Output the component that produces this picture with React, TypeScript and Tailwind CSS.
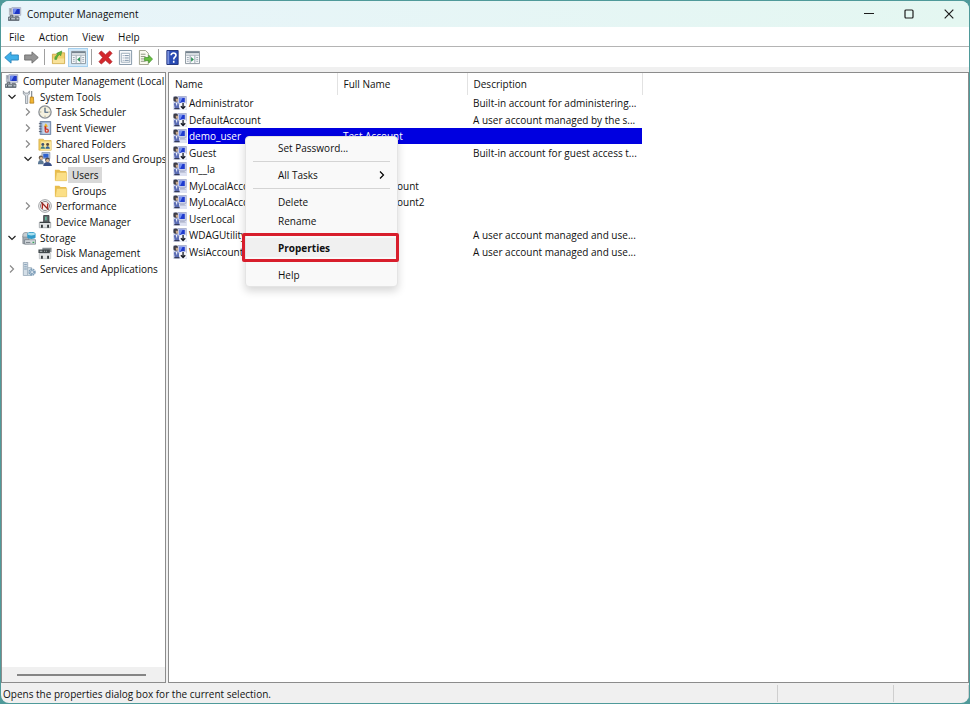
import type { ReactNode } from "react";
import clsx from "clsx";

type IconProps = { className?: string };

const Svg = ({ className, children }: IconProps & { children: ReactNode }) => (
	<svg viewBox="0 0 16 16" className={clsx("shrink-0", className ?? "size-[14px]")} aria-hidden="true">
		{children}
	</svg>
);

const ComputerIcon = ({ className }: IconProps) => (
	<Svg className={className}>
		<path d="M1 1h4v8H1z" fill="#b9bec8" />
		<path d="M2 2.500h2M2 4.500h2" stroke="#7d8492" />
		<path d="M4.500.5h10v9h-10z" fill="#d5d9e4" stroke="#a9afc4" />
		<path d="M6 2h7.500v6H6z" fill="#1c35c4" />
		<path d="M6 2h4.500L7 8H6z" fill="#6f8cf0" />
		<path d="M8 10h4v1.500H8z" fill="#8c90a0" />
		<path d="M2.500 9.500h3v2h-3z" fill="none" stroke="#4d5560" />
		<path d="M.5 11.500h12v4H.5z" fill="#87929b" stroke="#5d6670" />
		<path d="M1 13h11" stroke="#c8d0d6" />
		<path d="M3 12.500v2M9 12.500v2" stroke="#2f363e" />
	</Svg>
);

const UserIcon = ({ disabled, className }: IconProps & { disabled?: boolean }) => (
	<Svg className={className}>
		<path d="M0 0h16v16H0z" fill="#dde1f2" />
		<path d="M5.500.5h9.500v9H5.500z" fill="#d3d8ee" stroke="#a6adcb" />
		<path d="M7 2h6.500v6H7z" fill="#1f3bcf" />
		<path d="M7 2h4L8 8H7z" fill="#7791ee" />
		<path d="M8 10.500h5l2 1.500H8z" fill="#a3a9c2" />
		<path d="M.5 2C1 .5 4.500 0 5.500 2l.3 3-1.300 1.500H2L.5 5z" fill="#3b3b45" />
		<path d="M3 3h2.700v3.200H3.500z" fill="#c9a88c" />
		<path d="M1 9c1-2 4-2 5.500 0l1 5.500H2z" fill="#5a6bb4" />
		<path d="M3 8h2l-.5 4z" fill="#eef1fa" />
		<path d="M1.500 14.500h6" stroke="#343b5c" strokeWidth="1.500" />
		{disabled && (
			<>
				<circle cx="11.500" cy="11.500" r="4.500" fill="#f5f6fb" />
				<path d="M11.500 8v6M9 11.700l2.500 2.600 2.500-2.600" fill="none" stroke="#171a26" strokeWidth="1.500" />
			</>
		)}
	</Svg>
);

const UsersIcon = () => (
	<Svg>
		<path d="M4.500.5h9v7h-9z" fill="#c8d2e2" stroke="#8a97ae" />
		<path d="M6 2h6v4.500H6z" fill="#2f62cf" />
		<path d="M0 13c0-5 6-5 6.500-1v2H0z" fill="#5c7895" />
		<circle cx="3.300" cy="6.500" r="2.500" fill="#6b5a4a" />
		<circle cx="3.800" cy="7.200" r="1.600" fill="#e2bd98" />
		<path d="M6 16c0-6 9-6 10 0z" fill="#394f86" />
		<circle cx="10.800" cy="9" r="2.700" fill="#4d4b50" />
		<circle cx="11" cy="9.800" r="1.800" fill="#e0bc97" />
	</Svg>
);

const ToolsIcon = () => (
	<Svg>
		<path
			d="M1.500 1v3.500L4 6.500v9h2.500v-9L8.500 4.500V1L7 3.500H3z"
			fill="#d8dde2"
			stroke="#7c858e"
			strokeWidth=".8"
		/>
		<path d="M11 1v8" stroke="#8a9198" strokeWidth="1.500" />
		<path d="M9.500 8H13l.5 7H9z" fill="#f2b632" stroke="#a97415" strokeWidth=".8" />
	</Svg>
);

const ClockIcon = () => (
	<Svg>
		<circle cx="8" cy="8" r="7" fill="#f5f1df" stroke="#8c9196" strokeWidth="1.500" />
		<path d="M8 2.500v1.300M8 12.200v1.300M2.500 8h1.300M12.200 8h1.300" stroke="#9a9272" />
		<path d="M8 3.500V8.300h3.800" fill="none" stroke="#3d5878" strokeWidth="1.300" />
	</Svg>
);

const EventIcon = () => (
	<Svg>
		<path d="M2.500.5h12v15h-12z" fill="#8fa8cc" stroke="#6a80a2" />
		<path d="M5 2h8.500v12.500H5z" fill="#c4d3e8" />
		<path d="M1 3h3M1 6h3M1 9h3M1 12h3" stroke="#51596a" />
		<path d="m9 2.500 2.500 4h-5z" fill="#f0b51d" />
		<path d="M8.500 6v4" stroke="#c2281d" strokeWidth="2" />
		<circle cx="10" cy="11" r="2.500" fill="#cf3d30" />
		<circle cx="10" cy="11" r="1" fill="#f3cfc6" />
	</Svg>
);

const SharedIcon = () => (
	<Svg>
		<path d="M1 2.500h5l1.500 1.500H15v11H1z" fill="#edc95c" stroke="#d6ae4b" strokeWidth=".8" />
		<path d="M3 5h12v10H3z" fill="#f9e59a" />
		<circle cx="5.500" cy="8.500" r="1.700" fill="#3f5472" />
		<path d="M3 13.500c0-4 5-4 5 0z" fill="#3f7d82" />
		<circle cx="11" cy="8.500" r="1.700" fill="#5d4b3b" />
		<path d="M8.500 13.500c0-4 5-4 5 0z" fill="#2d5f99" />
	</Svg>
);

const FolderIcon = () => (
	<Svg>
		<path d="M1 2h5l1.500 1.500H14v10.500H1z" fill="#e9bd4c" />
		<path d="M3 5h11.500v9.500H1.500z" fill="#fbdf86" stroke="#e5bf58" strokeWidth=".7" />
	</Svg>
);

const PerformanceIcon = () => (
	<Svg>
		<circle cx="8" cy="8" r="7.200" fill="#fff" stroke="#8d9094" />
		<circle cx="8" cy="8" r="5.200" fill="#fbecea" stroke="#777b80" />
		<path d="M5 11V5l6 6V5" fill="none" stroke="#b3251f" strokeWidth="1.500" />
		<path d="m3 3 9.500 10" stroke="#72302c" />
	</Svg>
);

const DeviceIcon = () => (
	<Svg>
		<path d="M6.500.5h6v8h-6z" fill="#62686c" stroke="#34393c" />
		<path d="M8 2h2v4H8z" fill="#62b89b" />
		<path d="M1.500 8.500h13v6h-13z" fill="#dfe2e3" stroke="#a3a8ab" />
		<path d="M2 8.500h12" stroke="#3c4144" strokeWidth="1.500" />
		<path d="M4.500 11v3.500M11.500 11v3.500" stroke="#272b2e" strokeWidth="2" />
	</Svg>
);

const StorageIcon = () => (
	<Svg>
		<path d="M1 6h7v8.500H1z" fill="#a4acb2" stroke="#707980" strokeWidth=".8" />
		<path d="M1 4c0-3 7-3 7 0v3H1z" fill="#c7ced2" stroke="#7a848c" strokeWidth=".8" />
		<path d="M6 3.500c0-3 9.500-3 9.500 0v4c0 2-9.500 2-9.500 0z" fill="#329bc9" />
		<ellipse cx="10.700" cy="3.500" rx="4.200" ry="1.600" fill="#a9e0ef" />
		<path d="M3 10h12.500v5H3z" fill="#d7dce0" stroke="#69737c" strokeWidth=".8" />
		<path d="M4.500 13h5" stroke="#626b74" />
		<path d="M12 13h2" stroke="#37a558" strokeWidth="1.500" />
	</Svg>
);

const DiskIcon = () => (
	<Svg>
		<path d="M5 2h10.500v5H5z" fill="#868d91" />
		<path d="M.5 4h13v4H.5z" fill="#3f4649" />
		<path d="M2 6h3M7 6h1M9 6h1" stroke="#d4dadc" />
		<path d="M1.500 8.500h13v6h-13z" fill="#e4e6e7" stroke="#a9aeb1" strokeWidth=".7" />
		<path d="M4.500 11v3.500M11.500 11v3.500" stroke="#2b3033" strokeWidth="2" />
	</Svg>
);

const ServicesIcon = () => (
	<Svg>
		<path d="M1.500.5h5v15h-5z" fill="#d3dee7" stroke="#9aacbb" />
		<path d="M2.500 3h3M2.500 5.500h3M2.500 8h3" stroke="#7896af" />
		<path d="M6.500 6.500h4.500v9H6.500z" fill="#dce5eb" stroke="#a2b3c0" />
		<circle cx="11.500" cy="11.500" r="3" fill="none" stroke="#7f9fba" strokeWidth="2.500" strokeDasharray="1.800 .6" />
		<circle cx="11.500" cy="11.500" r="1.700" fill="#e9f0f5" stroke="#7f9fba" />
	</Svg>
);

const ArrowIcon = ({ back }: { back?: boolean }) => (
	<Svg className="size-[15px]">
		<path
			d={back ? "m.8 8 6.700-6V5.300h7.800v5.400H7.500V14z" : "M15.200 8 8.500 2v3.300H.7v5.400h7.800V14z"}
			fill={back ? "#3fb0ea" : "#959595"}
			stroke={back ? "#2c86bd" : "#707070"}
		/>
	</Svg>
);

const UpFolderIcon = () => (
	<Svg className="size-[15px]">
		<path d="M1.500 4.500h5L8 3h6.500v11.500h-13z" fill="#eed06c" stroke="#cfa94b" />
		<path d="M2 9h12v5H2z" fill="#f8e29a" />
		<path d="M4 10c0-3 1-4 3-5L6 3.500 11.500 1l-1 5-1.500-1C7.500 6 6.500 7 6 10z" fill="#5db53c" stroke="#3e8f2c" strokeWidth=".6" />
	</Svg>
);

const PaneIcon = ({ right }: { right?: boolean }) => (
	<Svg className="size-[15px]">
		<path d="M.5 1.500h15v13H.5z" fill="#f6f8fa" stroke="#8b959e" />
		<path d="M1 2.500h14" stroke="#74828e" strokeWidth="2" />
		<path d="M1 5.500h14M10.500 6v8M5.500 6v8" stroke="#98a4ae" />
		<path d="M2 8h2M2 10h2M2 12h2M12 8h2M12 10h2M12 12h2" stroke="#9ba8b3" />
		<path d={right ? "m6.500 7.500 3 2.500-3 2.500z" : "m9.500 7.500-3 2.500 3 2.500z"} fill="#289050" />
	</Svg>
);

const DeleteIcon = () => (
	<Svg className="size-[15px]">
		<path
			d="M3.500 1 8 5l4.500-4L15 3.500 11 8l4 4.500-2.500 2.500L8 11l-4.500 4L1 12.500 5 8 1 3.500z"
			fill="#d4272c"
			stroke="#a5161b"
			strokeWidth=".7"
		/>
	</Svg>
);

const SheetIcon = () => (
	<Svg className="size-[15px]">
		<path d="M1.500.5h13v15h-13z" fill="#f7f9fb" stroke="#8093a4" />
		<path d="M3.500 3.500h9v9.500h-9z" fill="#fff" stroke="#9aabb9" />
		<path d="M5 6h1M7 6h4.500M5 8.500h1M7 8.500h4.500M5 11h1M7 11h4.500" stroke="#7087a0" />
	</Svg>
);

const ExportIcon = () => (
	<Svg className="size-[15px]">
		<path d="M1.500.5H8l3 3v12H1.500z" fill="#fbfaf0" stroke="#9d9f89" />
		<path d="M3 4.500h5M3 7h5M3 9.500h4M3 12h5" stroke="#87917a" />
		<path d="M7 8h4.500V5.500l4 4.200-4 4.200v-2.500H7z" fill="#68bf3f" stroke="#388b22" strokeWidth=".7" />
	</Svg>
);

const HelpIcon = () => (
	<Svg className="size-[15px]">
		<path d="M2 .5h12v15H2z" fill="#294bb5" stroke="#1c2f78" />
		<path d="M2.500 1h2v14h-2z" fill="#7a91dc" />
		<path d="M6.500 5.700c0-3.400 5.200-3.200 5.200 0 0 2-2.400 1.900-2.400 4.300M9.300 11.500v2" fill="none" stroke="#fff" strokeWidth="1.700" />
	</Svg>
);

const Chevron = ({ open, className }: { open?: boolean; className?: string }) => (
	<svg viewBox="0 0 10 10" className={clsx("size-[10px]", className)} aria-hidden="true">
		<path
			d={open ? "M1.500 3 5 6.500 8.500 3" : "M3 1.500 6.500 5 3 8.500"}
			fill="none"
			stroke={open ? "#222" : "currentColor"}
			strokeWidth="1.200"
		/>
	</svg>
);

type Node = {
	label: string;
	icon: ReactNode;
	indent: string;
	open?: boolean;
	leaf?: boolean;
	selected?: boolean;
};

const tree: Node[] = [
	{ label: "System Tools", icon: <ToolsIcon />, indent: "pl-[5px]", open: true },
	{ label: "Task Scheduler", icon: <ClockIcon />, indent: "pl-[21px]" },
	{ label: "Event Viewer", icon: <EventIcon />, indent: "pl-[21px]" },
	{ label: "Shared Folders", icon: <SharedIcon />, indent: "pl-[21px]" },
	{ label: "Local Users and Groups", icon: <UsersIcon />, indent: "pl-[21px]", open: true },
	{ label: "Users", icon: <FolderIcon />, indent: "pl-[37px]", leaf: true, selected: true },
	{ label: "Groups", icon: <FolderIcon />, indent: "pl-[37px]", leaf: true },
	{ label: "Performance", icon: <PerformanceIcon />, indent: "pl-[21px]" },
	{ label: "Device Manager", icon: <DeviceIcon />, indent: "pl-[21px]", leaf: true },
	{ label: "Storage", icon: <StorageIcon />, indent: "pl-[5px]", open: true },
	{ label: "Disk Management", icon: <DiskIcon />, indent: "pl-[21px]", leaf: true },
	{ label: "Services and Applications", icon: <ServicesIcon />, indent: "pl-[5px]" },
];

const users = [
	{ name: "Administrator", full: "", desc: "Built-in account for administering...", disabled: true },
	{ name: "DefaultAccount", full: "", desc: "A user account managed by the s...", disabled: true },
	{ name: "demo_user", full: "Test Account", desc: "", selected: true },
	{ name: "Guest", full: "", desc: "Built-in account for guest access t...", disabled: true },
	{ name: "m__la", full: "", desc: "" },
	{ name: "MyLocalAccount", full: "MyLocalAccount", desc: "" },
	{ name: "MyLocalAccount2", full: "MyLocalAccount2", desc: "" },
	{ name: "UserLocal", full: "", desc: "" },
	{ name: "WDAGUtilityAccount", full: "", desc: "A user account managed and use...", disabled: true },
	{ name: "WsiAccount", full: "", desc: "A user account managed and use...", disabled: true },
];

const TitleBar = () => (
	<header className="flex h-[26px] items-center bg-linear-to-r from-[#e8f4fa] to-[#e4f7f1] pl-[7px]">
		<ComputerIcon />
		<h1 className="ml-[5px] flex-1">Computer Management</h1>
		<div className="flex h-full text-[#1c1c1c]">
			<button aria-label="Minimize" className="grid w-10 place-items-center">
				<svg viewBox="0 0 10 10" className="size-[10px]">
					<path d="M0 4.500h10" stroke="currentColor" />
				</svg>
			</button>
			<button aria-label="Maximize" className="grid w-10 place-items-center">
				<svg viewBox="0 0 10 10" className="size-[10px]">
					<rect x="1" y="1" width="8" height="8" rx="1" fill="none" stroke="currentColor" strokeWidth="1.200" />
				</svg>
			</button>
			<button aria-label="Close" className="grid w-10 place-items-center">
				<svg viewBox="0 0 10 10" className="size-[10px]">
					<path d="m.7.7 8.600 8.600M9.300.7.7 9.300" stroke="currentColor" strokeWidth="1.200" />
				</svg>
			</button>
		</div>
	</header>
);

const ToolButton = ({ label, active, children }: { label: string; active?: boolean; children: ReactNode }) => (
	<button
		aria-label={label}
		className={clsx(
			"grid h-[19px] w-5 place-items-center border",
			active ? "border-[#a5d0ef] bg-[#d3e9f9]" : "border-transparent",
		)}
	>
		{children}
	</button>
);

const Divider = () => <span className="mx-[3px] h-4 w-px bg-[#a0a0a0]" />;

const Toolbar = () => (
	<div className="flex h-[21px] items-center border-t border-[#b4b4b4] bg-white">
		<ToolButton label="Back">
			<ArrowIcon back />
		</ToolButton>
		<ToolButton label="Forward">
			<ArrowIcon />
		</ToolButton>
		<Divider />
		<ToolButton label="Up one level">
			<UpFolderIcon />
		</ToolButton>
		<ToolButton label="Show/Hide Console Tree" active>
			<PaneIcon />
		</ToolButton>
		<Divider />
		<ToolButton label="Delete">
			<DeleteIcon />
		</ToolButton>
		<ToolButton label="Properties">
			<SheetIcon />
		</ToolButton>
		<ToolButton label="Export List">
			<ExportIcon />
		</ToolButton>
		<Divider />
		<ToolButton label="Help">
			<HelpIcon />
		</ToolButton>
		<ToolButton label="Show/Hide Action Pane">
			<PaneIcon right />
		</ToolButton>
	</div>
);

const Tree = () => (
	<nav className="flex w-[165px] shrink-0 flex-col overflow-hidden border border-[#8c8c8c] bg-white">
		<ul className="grid h-[204px] auto-rows-fr whitespace-nowrap">
			<li className="flex items-center gap-1 pl-[3px]">
				<ComputerIcon />
				<span>Computer Management (Local</span>
			</li>
			{tree.map((n) => (
				<li key={n.label} className={clsx("flex items-center", n.indent)}>
					{n.leaf ? (
						<span className="w-[15px]" />
					) : (
						<button aria-label={`Toggle ${n.label}`} className="w-[15px] shrink-0 text-[#8a8a8a]">
							<Chevron open={n.open} />
						</button>
					)}
					{n.icon}
					<span className={clsx("pr-[3px] pl-1", n.selected && "bg-[#d9d9d9]")}>{n.label}</span>
				</li>
			))}
		</ul>
		<div className="mt-auto flex h-[15px] items-center bg-[#f0f0f0] px-[15px]">
			<div className="mr-1 h-0.5 flex-1 bg-[#858585]" />
		</div>
	</nav>
);

const MenuItem = ({ children, className }: { children: ReactNode; className?: string }) => (
	<button role="menuitem" className={clsx("flex h-[19px] w-full items-center justify-between pr-[10px] pl-8", className)}>
		{children}
	</button>
);

const MenuRule = () => <hr className="mx-[7px] mt-1 mb-[3px] border-t border-[#d4d4d4]" />;

const ContextMenu = () => (
	<div
		role="menu"
		className="absolute top-[63px] left-[76px] w-[153px] rounded-sm border border-[#e4e4e4] bg-[#f9f9f9] pt-px pb-0.5 shadow-[0_4px_8px_rgba(0,0,0,0.16)]"
	>
		<MenuItem>Set Password...</MenuItem>
		<MenuRule />
		<MenuItem>
			All Tasks
			<Chevron className="text-black" />
		</MenuItem>
		<MenuRule />
		<MenuItem>Delete</MenuItem>
		<MenuItem>Rename</MenuItem>
		<div className="relative my-2">
			<MenuItem className="bg-[#f0f0f0] font-bold">Properties</MenuItem>
			<span className="pointer-events-none absolute -inset-y-[5px] -right-0.5 -left-1 rounded-xs border-3 border-[#d81e2c]" />
		</div>
		<MenuItem>Help</MenuItem>
	</div>
);

const UserList = () => (
	<main className="relative min-w-0 flex-1 border border-[#8c8c8c] bg-white">
		<table className="w-[473px] table-fixed border-collapse text-left whitespace-nowrap">
			<colgroup>
				<col className="w-[19px]" />
				<col className="w-[149px]" />
				<col className="w-[130px]" />
				<col className="w-[175px]" />
			</colgroup>
			<thead>
				<tr className="h-[22px]">
					<th colSpan={2} className="border-r border-[#e2e2e2] py-0 pr-0 pl-[6px] font-normal">
						Name
					</th>
					<th className="border-r border-[#e2e2e2] py-0 pr-0 pl-[6px] font-normal">Full Name</th>
					<th className="border-r border-[#e2e2e2] py-0 pr-0 pl-[6px] font-normal">Description</th>
				</tr>
			</thead>
			<tbody>
				{users.map((u, i) => (
					<tr key={u.name} className={i % 2 ? "h-[17px]" : "h-4"}>
						<td className="p-0 pl-1">
							<UserIcon disabled={u.disabled} />
						</td>
						<td className={clsx("overflow-hidden p-0 pl-px", u.selected && "bg-[#0000e0] text-white")}>{u.name}</td>
						<td className={clsx("p-0 pl-[6px]", u.selected && "bg-[#0000e0] text-white")}>{u.full}</td>
						<td className={clsx("p-0 pl-[6px]", u.selected && "bg-[#0000e0]")}>{u.desc}</td>
					</tr>
				))}
			</tbody>
		</table>
		<ContextMenu />
	</main>
);

export default function App() {
	return (
		<div className="flex h-screen flex-col bg-[#4f9a9a] p-px font-['Open_Sans',sans-serif] text-[10px] leading-4 text-[#101010]">
			<div className="flex min-h-0 flex-1 flex-col overflow-hidden rounded-lg bg-[#f0f0f0]">
				<TitleBar />
				<div role="menubar" className="flex h-[19px] items-center bg-white pl-px">
					{["File", "Action", "View", "Help"].map((m) => (
						<button key={m} role="menuitem" className="px-[7px]">
							{m}
						</button>
					))}
				</div>
				<Toolbar />
				<div className="mt-[5px] flex min-h-0 flex-1 gap-0.5">
					<Tree />
					<UserList />
				</div>
				<footer className="flex h-5 items-center pt-px">
					<p className="flex-1 pl-0.5">Opens the properties dialog box for the current selection.</p>
					<span className="h-[17px] w-[116px] border-l border-[#cfcfcf]" />
					<span className="h-[17px] w-[76px] border-x border-[#cfcfcf]" />
				</footer>
			</div>
		</div>
	);
}
